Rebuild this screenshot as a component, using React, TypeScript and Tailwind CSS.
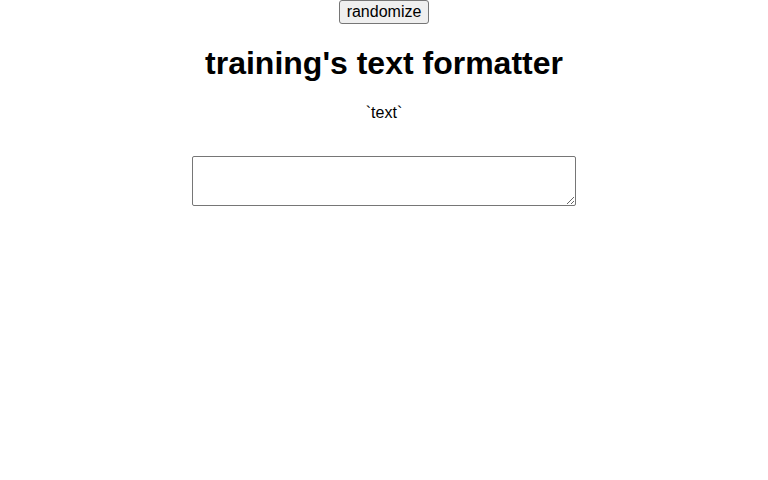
import { useState } from "react";

const samples = ["`text`", "*text*", "_text_", "~text~", "**text**"];

export default function App() {
  const [sample, setSample] = useState(samples[0]);
  const [value, setValue] = useState("");

  return (
    <div className="min-h-[480px] bg-white text-center text-black font-['Liberation_Sans',Arial,sans-serif]">
      <button
        type="button"
        onClick={() => setSample(samples[Math.floor(Math.random() * samples.length)])}
        className="h-[24px] px-[7px] text-base leading-[20px] bg-[#efefef] border border-[#767676] rounded-[3px] hover:bg-[#e5e5e5]"
      >
        randomize
      </button>

      <h1 className="mt-[21.44px] text-[32px] leading-[37px] font-bold">training's text formatter</h1>

      <p className="mt-[21.44px] text-base leading-[18.4px]">{sample}</p>

      <textarea
        value={value}
        onChange={(e) => setValue(e.target.value)}
        className="block mx-auto mt-[33.7px] w-[384px] h-[50px] border border-[#767676] rounded-[2px] p-[2px] text-[13.33px] font-['Liberation_Mono',monospace] outline-none"
      />
    </div>
  );
}
